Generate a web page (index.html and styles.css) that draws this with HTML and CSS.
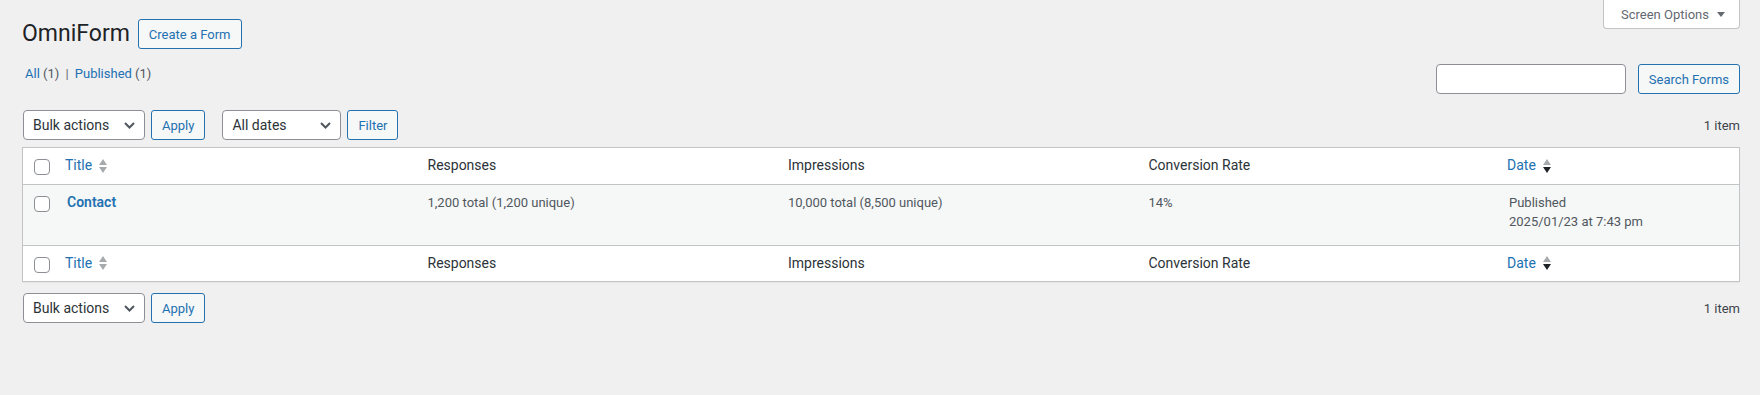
FILE: index.html
```html
<!DOCTYPE html>
<html lang="en">
<head>
  <meta charset="UTF-8" />
  <meta name="viewport" content="width=device-width, initial-scale=1.0" />
  <title>OmniForm</title>
  <link rel="stylesheet" href="styles.css">
</head>
<body>
  <div class="top">
    <div class="top-left">
      <div class="heading">
        <h1>OmniForm</h1>
        <a href="#" class="btn">Create a Form</a>
      </div>
      <ul class="subsubsub">
        <li><a href="#">All</a> <span class="count">(1)</span> <span class="sep">|</span></li>
        <li><a href="#">Published</a> <span class="count">(1)</span></li>
      </ul>
    </div>
    <div class="top-right">
      <button class="screen-opts">Screen Options
        <svg width="8" height="5" viewBox="0 0 8 5"><path d="M0 0h8L4 5z" fill="#646970"/></svg>
      </button>
      <div class="search-box">
        <input type="search" class="search-input" />
        <a href="#" class="btn">Search Forms</a>
      </div>
    </div>
  </div>

  <div class="tablenav tablenav-top">
    <div class="actions">
      <div class="select bulk">Bulk actions
        <svg width="11" height="7" viewBox="0 0 11 7"><path d="M1 1l4.5 4.5L10 1" fill="none" stroke="#50575e" stroke-width="2"/></svg>
      </div>
      <a href="#" class="btn">Apply</a>
    </div>
    <div class="actions">
      <div class="select dates">All dates
        <svg width="11" height="7" viewBox="0 0 11 7"><path d="M1 1l4.5 4.5L10 1" fill="none" stroke="#50575e" stroke-width="2"/></svg>
      </div>
      <a href="#" class="btn">Filter</a>
    </div>
    <span class="num">1 item</span>
  </div>

  <div class="table-wrap">
    <table class="list">
      <colgroup>
        <col class="col-cb" />
        <col />
        <col />
        <col />
        <col />
        <col class="col-date" />
      </colgroup>
      <thead>
        <tr>
          <th class="check"><span class="cb"></span></th>
          <th class="sortable"><a href="#">Title
            <svg width="8" height="14" viewBox="0 0 8 14"><path d="M0 6 4 0 8 6z" fill="#a7aaad"/><path d="M0 8h8l-4 6z" fill="#a7aaad"/></svg></a></th>
          <th>Responses</th>
          <th>Impressions</th>
          <th>Conversion Rate</th>
          <th class="sortable"><a href="#">Date
            <svg width="8" height="14" viewBox="0 0 8 14"><path d="M0 6 4 0 8 6z" fill="#a7aaad"/><path d="M0 8h8l-4 6z" fill="#1d2327"/></svg></a></th>
        </tr>
      </thead>
      <tbody>
        <tr>
          <td class="check"><span class="cb"></span></td>
          <td>
            <strong class="row-title"><a href="#">Contact</a></strong>
            <div class="row-actions">Edit | Trash</div>
          </td>
          <td>1,200 total (1,200 unique)</td>
          <td>10,000 total (8,500 unique)</td>
          <td>14%</td>
          <td>Published<br />2025/01/23 at 7:43 pm</td>
        </tr>
      </tbody>
      <tfoot>
        <tr>
          <th class="check"><span class="cb"></span></th>
          <th class="sortable"><a href="#">Title
            <svg width="8" height="14" viewBox="0 0 8 14"><path d="M0 6 4 0 8 6z" fill="#a7aaad"/><path d="M0 8h8l-4 6z" fill="#a7aaad"/></svg></a></th>
          <th>Responses</th>
          <th>Impressions</th>
          <th>Conversion Rate</th>
          <th class="sortable"><a href="#">Date
            <svg width="8" height="14" viewBox="0 0 8 14"><path d="M0 6 4 0 8 6z" fill="#a7aaad"/><path d="M0 8h8l-4 6z" fill="#1d2327"/></svg></a></th>
        </tr>
      </tfoot>
    </table>
  </div>

  <div class="tablenav tablenav-bottom">
    <div class="actions">
      <div class="select bulk">Bulk actions
        <svg width="11" height="7" viewBox="0 0 11 7"><path d="M1 1l4.5 4.5L10 1" fill="none" stroke="#50575e" stroke-width="2"/></svg>
      </div>
      <a href="#" class="btn">Apply</a>
    </div>
    <span class="num">1 item</span>
  </div>
</body>
</html>
```

FILE: styles.css
```css
body {
  margin: 0;
  background: #f0f0f1;
  font-family: Roboto, "Liberation Sans", sans-serif;
  font-size: 13px;
  color: #3c434a;
}
a {
  color: #2271b1;
  text-decoration: none;
}
.btn {
  display: inline-flex;
  align-items: center;
  box-sizing: border-box;
  height: 30px;
  padding: 0 10px;
  border: 1px solid #2271b1;
  border-radius: 3px;
  background: #f6f7f7;
  color: #2271b1;
  font-size: 13px;
  white-space: nowrap;
}

/* header area */
.top {
  display: flex;
  justify-content: space-between;
  align-items: flex-start;
  padding: 0 20px 0 22px;
}
.heading {
  display: flex;
  align-items: center;
  padding-top: 19px;
  height: 30px;
}
h1 {
  margin: 0 8px 0 0;
  font-size: 23px;
  font-weight: 400;
  line-height: 30px;
  color: #1d2327;
}
.subsubsub {
  list-style: none;
  margin: 15px 0 0 3px;
  padding: 0;
  line-height: 20px;
  color: #646970;
  display: flex;
  gap: 6px;
}
.subsubsub .count {
  color: #50575e;
}
.subsubsub .sep {
  margin-left: 3px;
}
.top-right {
  display: flex;
  flex-direction: column;
  align-items: flex-end;
}
.screen-opts {
  display: flex;
  align-items: center;
  gap: 8px;
  box-sizing: border-box;
  width: 137px;
  height: 29px;
  padding: 0 0 0 17px;
  background: #fff;
  border: 1px solid #c3c4c7;
  border-top: 0;
  border-radius: 0 0 4px 4px;
  color: #646970;
  font: 13px Roboto, "Liberation Sans", sans-serif;
}
.search-box {
  display: flex;
  gap: 12px;
  margin-top: 35px;
}
.search-input {
  box-sizing: border-box;
  width: 190px;
  height: 30px;
  border: 1px solid #8c8f94;
  border-radius: 4px;
  background: #fff;
}

/* table nav */
.tablenav {
  display: flex;
  align-items: center;
  height: 30px;
  padding: 0 20px 0 23px;
}
.tablenav-top {
  margin-top: 16px;
}
.tablenav-bottom {
  margin-top: 11px;
}
.actions {
  display: flex;
  gap: 6px;
  margin-right: 17px;
}
.select {
  display: flex;
  align-items: center;
  justify-content: space-between;
  box-sizing: border-box;
  height: 30px;
  padding: 0 9px 0 9px;
  border: 1px solid #8c8f94;
  border-radius: 4px;
  background: #fff;
  color: #2c3338;
  font-size: 14px;
}
.select.bulk {
  width: 122px;
}
.select.dates {
  width: 119px;
}
.num {
  margin-left: auto;
  color: #3c434a;
}

/* list table */
.table-wrap {
  margin: 7px 20px 0 22px;
}
.list {
  width: 100%;
  table-layout: fixed;
  border-collapse: separate;
  border-spacing: 0;
  border: 1px solid #c3c4c7;
  background: #fff;
  box-shadow: 0 1px 1px rgba(0, 0, 0, 0.04);
}
.col-cb {
  width: 34px;
}
.col-date {
  width: 240px;
}
.list th {
  padding: 8px 10px;
  font-size: 14px;
  font-weight: 400;
  line-height: 19.6px;
  text-align: left;
  color: #2c3338;
}
.list thead th {
  border-bottom: 1px solid #c3c4c7;
}
.list tfoot th {
  border-top: 1px solid #c3c4c7;
}
.list th.sortable {
  padding-left: 8px;
}
.list th.sortable a {
  display: inline-flex;
  align-items: center;
  gap: 7px;
}
.list td {
  padding: 8px 10px;
  line-height: 19.5px;
  vertical-align: top;
  color: #50575e;
  background: #f6f7f7;
}
.list .check {
  padding: 11px 0 0 11px;
  vertical-align: top;
}
.cb {
  display: block;
  box-sizing: border-box;
  width: 16px;
  height: 16px;
  border: 1px solid #8c8f94;
  border-radius: 4px;
  background: #fff;
}
.row-title {
  display: block;
  margin-bottom: 3px;
  font-size: 14px;
  font-weight: 600;
}
.row-actions {
  padding-top: 2px;
  visibility: hidden;
}
```
